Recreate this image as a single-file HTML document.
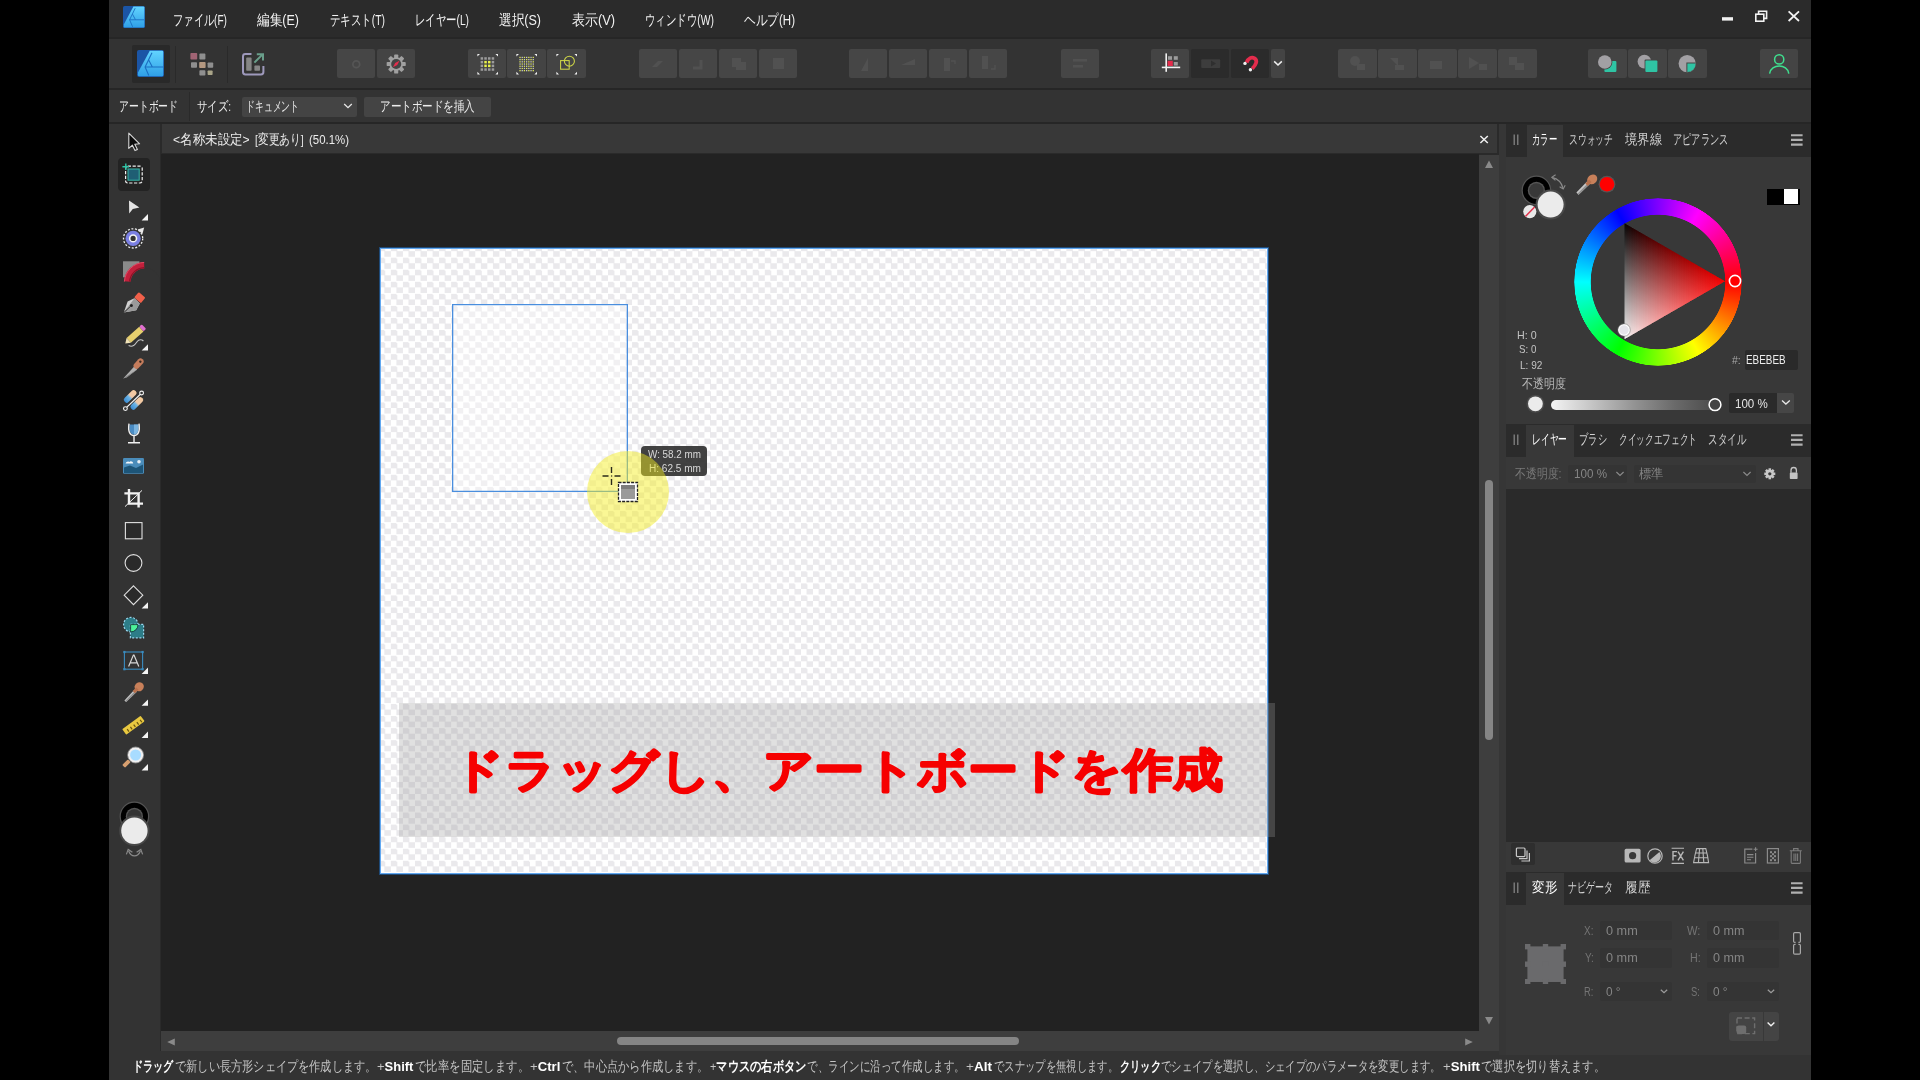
<!DOCTYPE html>
<html lang="ja"><head><meta charset="utf-8"><title>Affinity Designer</title>
<style>
html,body{margin:0;padding:0;width:1920px;height:1080px;overflow:hidden;background:#000;}
body{font-family:"Liberation Sans",sans-serif;position:relative;}
#app div,#app svg,#app span.t{position:absolute;}
#app{position:absolute;left:0;top:0;width:1920px;height:1080px;overflow:hidden;}
span.t{white-space:nowrap;transform-origin:0 50%;display:block;z-index:5;}
b{font-weight:bold;color:#fff;}
</style></head><body><div id="app">
<div style="left:109px;top:0px;width:1702px;height:1080px;background:#333333;"></div>
<div style="left:109px;top:0px;width:1702px;height:37px;background:#2b2b2b;"></div>
<div style="left:109px;top:37px;width:1702px;height:2px;background:#262626;"></div>
<div style="left:109px;top:88px;width:1702px;height:2px;background:#262626;"></div>
<div style="left:109px;top:122px;width:1702px;height:2px;background:#262626;"></div>
<div style="left:160px;top:124px;width:1340px;height:931px;background:#2a2a2a;"></div>
<div style="left:162px;top:124px;width:1335px;height:29.4px;background:#383838;"></div>
<div style="left:161px;top:154px;width:1318px;height:877px;background:#222222;"></div>
<div style="left:1479px;top:155px;width:20px;height:896px;background:#3e3e3e;"></div>
<div style="left:161px;top:1031px;width:1338px;height:20px;background:#3e3e3e;"></div>
<div style="left:160px;top:1051px;width:1340px;height:30px;background:#333333;"></div>
<div style="left:1499px;top:124px;width:7px;height:931px;background:#363636;"></div>
<div style="left:1506px;top:124px;width:305px;height:931px;background:#383838;"></div>
<div style="left:1506px;top:124px;width:305px;height:33px;background:#2b2b2b;"></div>
<div style="left:1506px;top:424px;width:305px;height:33px;background:#2b2b2b;"></div>
<div style="left:1506px;top:872px;width:305px;height:33px;background:#2b2b2b;"></div>
<div style="left:1526.6px;top:125px;width:36.6px;height:32px;background:#383838;"></div>
<div style="left:1526.4px;top:425px;width:48px;height:32px;background:#383838;"></div>
<div style="left:1526.4px;top:873px;width:37.2px;height:32px;background:#383838;"></div>
<div style="left:1506px;top:489px;width:305px;height:353px;background:#2a2a2a;"></div>
<div style="left:109px;top:1055px;width:1702px;height:25px;background:#333333;"></div>
<span class="t" style="left:173px;top:9.0px;font-size:14.8px;line-height:22px;color:#f2f2f2;transform:scaleX(0.6844);">ファイル(F)</span>
<span class="t" style="left:257px;top:9.0px;font-size:14.8px;line-height:22px;color:#f2f2f2;transform:scaleX(0.8445);">編集(E)</span>
<span class="t" style="left:330px;top:9.0px;font-size:14.8px;line-height:22px;color:#f2f2f2;transform:scaleX(0.6970);">テキスト(T)</span>
<span class="t" style="left:415px;top:9.0px;font-size:14.8px;line-height:22px;color:#f2f2f2;transform:scaleX(0.6915);">レイヤー(L)</span>
<span class="t" style="left:499px;top:9.0px;font-size:14.8px;line-height:22px;color:#f2f2f2;transform:scaleX(0.8445);">選択(S)</span>
<span class="t" style="left:572px;top:9.0px;font-size:14.8px;line-height:22px;color:#f2f2f2;transform:scaleX(0.8646);">表示(V)</span>
<span class="t" style="left:645px;top:9.0px;font-size:14.8px;line-height:22px;color:#f2f2f2;transform:scaleX(0.6982);">ウィンドウ(W)</span>
<span class="t" style="left:744px;top:9.0px;font-size:14.8px;line-height:22px;color:#f2f2f2;transform:scaleX(0.7781);">ヘルプ(H)</span>
<span class="t" style="left:119px;top:96.9px;font-size:13.6px;line-height:20px;color:#ececec;transform:scaleX(0.7024);">アートボード</span>
<span class="t" style="left:197px;top:96.9px;font-size:13.6px;line-height:20px;color:#ececec;transform:scaleX(0.7427);">サイズ:</span>
<span class="t" style="left:246px;top:96.9px;font-size:13.6px;line-height:20px;color:#ececec;transform:scaleX(0.6310);">ドキュメント</span>
<span class="t" style="left:380px;top:96.9px;font-size:13.6px;line-height:20px;color:#ececec;transform:scaleX(0.7540);">アートボードを挿入</span>
<span class="t" style="left:173.3px;top:130.2px;font-size:13.6px;line-height:20px;color:#ececec;transform:scaleX(0.8930);">&lt;名称未設定&gt;</span>
<span class="t" style="left:255px;top:130.2px;font-size:13.6px;line-height:20px;color:#ececec;transform:scaleX(0.7662);">[変更あり]</span>
<span class="t" style="left:309.2px;top:130.2px;font-size:13.6px;line-height:20px;color:#ececec;transform:scaleX(0.8402);">(50.1%)</span>
<span class="t" style="left:1532px;top:129.8px;font-size:13.6px;line-height:20px;color:#fff;transform:scaleX(0.5952);">カラー</span>
<span class="t" style="left:1569px;top:129.8px;font-size:13.6px;line-height:20px;color:#d2d2d2;transform:scaleX(0.6286);">スウォッチ</span>
<span class="t" style="left:1625px;top:129.8px;font-size:13.6px;line-height:20px;color:#d2d2d2;transform:scaleX(0.8810);">境界線</span>
<span class="t" style="left:1673px;top:129.8px;font-size:13.6px;line-height:20px;color:#d2d2d2;transform:scaleX(0.6548);">アピアランス</span>
<span class="t" style="left:1532px;top:429.8px;font-size:13.6px;line-height:20px;color:#fff;transform:scaleX(0.6250);">レイヤー</span>
<span class="t" style="left:1579px;top:429.8px;font-size:13.6px;line-height:20px;color:#d2d2d2;transform:scaleX(0.6667);">ブラシ</span>
<span class="t" style="left:1619px;top:429.8px;font-size:13.6px;line-height:20px;color:#d2d2d2;transform:scaleX(0.6190);">クイックエフェクト</span>
<span class="t" style="left:1708px;top:429.8px;font-size:13.6px;line-height:20px;color:#d2d2d2;transform:scaleX(0.6786);">スタイル</span>
<span class="t" style="left:1532px;top:877.8px;font-size:13.6px;line-height:20px;color:#fff;transform:scaleX(0.8929);">変形</span>
<span class="t" style="left:1568px;top:877.8px;font-size:13.6px;line-height:20px;color:#d2d2d2;transform:scaleX(0.6429);">ナビゲータ</span>
<span class="t" style="left:1625px;top:877.8px;font-size:13.6px;line-height:20px;color:#d2d2d2;transform:scaleX(0.8929);">履歴</span>
<span class="t" style="left:133.2px;top:1056.6px;font-size:13.6px;line-height:20px;color:#c4c4c4;transform:scaleX(0.7250);"><b>ドラッグ</b></span>
<span class="t" style="left:174.6px;top:1056.6px;font-size:13.6px;line-height:20px;color:#c4c4c4;transform:scaleX(0.7992);">で新しい長方形シェイプを作成します。</span>
<span class="t" style="left:377.3px;top:1056.6px;font-size:13.6px;line-height:20px;color:#c4c4c4;transform:scaleX(0.9540);">+<b>Shift</b></span>
<span class="t" style="left:415px;top:1056.6px;font-size:13.6px;line-height:20px;color:#c4c4c4;transform:scaleX(0.8143);">で比率を固定します。</span>
<span class="t" style="left:530.3px;top:1056.6px;font-size:13.6px;line-height:20px;color:#c4c4c4;transform:scaleX(0.9689);">+<b>Ctrl</b></span>
<span class="t" style="left:562px;top:1056.6px;font-size:13.6px;line-height:20px;color:#c4c4c4;transform:scaleX(0.8022);">で、中心点から作成します。</span>
<span class="t" style="left:709.5px;top:1056.6px;font-size:13.6px;line-height:20px;color:#c4c4c4;transform:scaleX(0.8045);">+<b>マウスの右ボタン</b></span>
<span class="t" style="left:807.4px;top:1056.6px;font-size:13.6px;line-height:20px;color:#c4c4c4;transform:scaleX(0.7505);">で、ラインに沿って作成します。</span>
<span class="t" style="left:966.4px;top:1056.6px;font-size:13.6px;line-height:20px;color:#c4c4c4;transform:scaleX(0.9970);">+<b>Alt</b></span>
<span class="t" style="left:993.6px;top:1056.6px;font-size:13.6px;line-height:20px;color:#c4c4c4;transform:scaleX(0.7381);">でスナップを無視します。</span>
<span class="t" style="left:1119.6px;top:1056.6px;font-size:13.6px;line-height:20px;color:#c4c4c4;transform:scaleX(0.7321);"><b>クリック</b></span>
<span class="t" style="left:1161.4px;top:1056.6px;font-size:13.6px;line-height:20px;color:#c4c4c4;transform:scaleX(0.7397);">でシェイプを選択し、シェイプのパラメータを変更します。</span>
<span class="t" style="left:1443.2px;top:1056.6px;font-size:13.6px;line-height:20px;color:#c4c4c4;transform:scaleX(0.9671);">+<b>Shift</b></span>
<span class="t" style="left:1481px;top:1056.6px;font-size:13.6px;line-height:20px;color:#c4c4c4;transform:scaleX(0.8039);">で選択を切り替えます。</span>
<div style="left:379.3px;top:247px;width:889.8px;height:628.3px;background:#1f4a78;"></div>
<div style="left:380px;top:248px;width:888.3px;height:626px;background:#fff;background-color:#fff;background-image:repeating-conic-gradient(#eae9ec 0% 25%,#ffffff 0% 50%);background-size:12.068px 12.068px;background-position:-1.23px 3.2px;box-shadow:inset 0 0 0 1px #62a8f0;"></div>
<div style="left:399px;top:703px;width:876px;height:134px;background:rgba(153,153,153,0.30);"></div>
<svg style="left:440px;top:730px;" width="800" height="84" viewBox="0 0 800 84"><text transform="translate(13.25,0) scale(1.09,1)" x="0" y="56" font-size="46" font-weight="bold" textLength="706.4" lengthAdjust="spacing" fill="#f60000" stroke="#f60000" stroke-width="2.1" stroke-linejoin="round" style="font-family:'Liberation Sans',sans-serif">ドラッグし、アートボードを作成</text></svg>
<div style="left:452px;top:304px;width:176px;height:188px;background:rgba(255,255,255,0.34);box-shadow:inset 0 0 0 1.3px #4a8ede;"></div>
<div style="left:641px;top:446px;width:66px;height:30px;background:rgba(40,40,40,0.88);border-radius:4px;"></div>
<span class="t" style="left:648px;top:447.0px;font-size:10px;line-height:15px;color:#d8d8d8;transform:scaleX(0.9866);">W: 58.2 mm</span>
<span class="t" style="left:649px;top:460.5px;font-size:10px;line-height:15px;color:#d8d8d8;transform:scaleX(1.0060);">H: 62.5 mm</span>
<svg style="left:600px;top:465px;z-index:10;" width="24" height="24" viewBox="0 0 24 24"><path d="M11.5 2v6M11.5 14v6M2.5 11h6M14.5 11h6" stroke="#2a2a1a" stroke-width="1.4" fill="none"/><rect x="11" y="10.4" width="1.2" height="1.2" fill="#2a2a1a"/></svg>
<svg style="left:617px;top:481px;z-index:10;" width="22" height="22" viewBox="0 0 22 22"><rect x="1.5" y="1.5" width="19" height="19" fill="#fff" stroke="#222" stroke-width="1.3" stroke-dasharray="3 1.2"/><rect x="4" y="4" width="14" height="14" fill="#9a9a9a"/><rect x="4" y="4" width="14" height="4" fill="#7c7c7c"/></svg>
<div style="left:586.6px;top:451px;width:82px;height:82px;background:rgba(244,238,30,0.47);border-radius:50%;z-index:9;"></div>
<svg style="left:123px;top:6px;" width="22" height="22" viewBox="0 0 22 22"><defs><linearGradient id="lg123" x1="0" y1="0" x2="0" y2="1"><stop offset="0" stop-color="#62d4ff"/><stop offset="1" stop-color="#2f9fe6"/></linearGradient></defs><rect x="0" y="0" width="22" height="22" rx="1.6" fill="#1b55a6"/><path d="M10.4 0.6H20.4Q21.4 0.6 21.4 1.6V20.4Q21.4 21.4 20.4 21.4H1.6Q0.6 21.4 0.7 20.2L0.9 18.2Z" fill="url(#lg123)"/><path d="M12.2 2.2L6.6 13.8L9.6 20.8M6.6 13.8H21.2M9.4 8L12.4 13.6" stroke="#1b6ec2" stroke-width="0.9" fill="none"/></svg>
<svg style="left:1718px;top:8px;" width="90" height="18" viewBox="0 0 90 18"><rect x="4" y="9.2" width="11" height="3.4" fill="#f2f2f2"/><rect x="37.8" y="6.2" width="8" height="7" fill="none" stroke="#f2f2f2" stroke-width="1.6"/><path d="M40.6 6V3.2H48.6V10.4H46" fill="none" stroke="#f2f2f2" stroke-width="1.6"/><path d="M70.6 3.4L81 13M81 3.4L70.6 13" stroke="#f2f2f2" stroke-width="1.8" fill="none"/></svg>
<div style="left:132px;top:45px;width:38px;height:38px;background:#292929;border-radius:2px;"></div>
<svg style="left:137px;top:50px;" width="27" height="27" viewBox="0 0 22 22"><defs><linearGradient id="lg137" x1="0" y1="0" x2="0" y2="1"><stop offset="0" stop-color="#62d4ff"/><stop offset="1" stop-color="#2f9fe6"/></linearGradient></defs><rect x="0" y="0" width="22" height="22" rx="1.6" fill="#1b55a6"/><path d="M10.4 0.6H20.4Q21.4 0.6 21.4 1.6V20.4Q21.4 21.4 20.4 21.4H1.6Q0.6 21.4 0.7 20.2L0.9 18.2Z" fill="url(#lg137)"/><path d="M12.2 2.2L6.6 13.8L9.6 20.8M6.6 13.8H21.2M9.4 8L12.4 13.6" stroke="#1b6ec2" stroke-width="0.9" fill="none"/></svg>
<div style="left:175px;top:46px;width:1px;height:37px;background:#2a2a2a;"></div>
<div style="left:227px;top:46px;width:1px;height:37px;background:#2a2a2a;"></div>
<svg style="left:186px;top:50px;opacity:0.9;" width="32" height="30" viewBox="0 0 32 30"><rect x="4.4" y="3.0" width="6.8" height="6.6" rx="0.8" fill="#ae6a7c"/><rect x="13.4" y="3.6" width="6" height="6" rx="0.8" fill="#9a9a9a"/><rect x="5.0" y="12.2" width="6" height="5.6" rx="0.8" fill="#9a9a9a"/><rect x="13.2" y="12.0" width="6.4" height="6" rx="0.8" fill="#c2a48a"/><rect x="21.6" y="12.4" width="5.6" height="5.4" rx="0.8" fill="#9a9a9a"/><rect x="13.4" y="20.2" width="6" height="5.4" rx="0.8" fill="#9a9a9a"/><rect x="21.6" y="20.4" width="5" height="4.6" rx="0.8" fill="#b6b192"/></svg>
<svg style="left:240px;top:50px;opacity:0.92;" width="28" height="28" viewBox="0 0 28 28"><path d="M11.5 4H5.4Q3 4 3 6.4V22Q3 24.4 5.4 24.4H21Q23.4 24.4 23.4 22V16" fill="none" stroke="#a8a2c8" stroke-width="2"/><rect x="6.2" y="7.6" width="5.4" height="13.2" rx="0.8" fill="#8e8e8e"/><rect x="14.4" y="15.6" width="5.6" height="5.2" rx="0.8" fill="#8e8e8e"/><path d="M14.4 12.6L22.4 4.6M16.8 4.2H23V10.4" fill="none" stroke="#6ea892" stroke-width="2"/></svg>
<div style="left:337px;top:49px;width:38px;height:29px;background:#464646;border-radius:2px;"></div>
<svg style="left:337px;top:49px;" width="38" height="29" viewBox="0 0 38 29"><circle cx="19.3" cy="15.2" r="3.4" fill="none" stroke="#555" stroke-width="1.8"/></svg>
<div style="left:377px;top:49px;width:38px;height:29px;background:#444444;border-radius:2px;"></div>
<svg style="left:377px;top:49px;" width="38" height="29" viewBox="0 0 38 29"><g transform="translate(19.2,15) scale(0.9)"><rect x="-2.3" y="-10.6" width="4.6" height="5" rx="1" fill="#a0a0a0" transform="rotate(0)"/><rect x="-2.3" y="-10.6" width="4.6" height="5" rx="1" fill="#a0a0a0" transform="rotate(45)"/><rect x="-2.3" y="-10.6" width="4.6" height="5" rx="1" fill="#a0a0a0" transform="rotate(90)"/><rect x="-2.3" y="-10.6" width="4.6" height="5" rx="1" fill="#a0a0a0" transform="rotate(135)"/><rect x="-2.3" y="-10.6" width="4.6" height="5" rx="1" fill="#a0a0a0" transform="rotate(180)"/><rect x="-2.3" y="-10.6" width="4.6" height="5" rx="1" fill="#a0a0a0" transform="rotate(225)"/><rect x="-2.3" y="-10.6" width="4.6" height="5" rx="1" fill="#a0a0a0" transform="rotate(270)"/><rect x="-2.3" y="-10.6" width="4.6" height="5" rx="1" fill="#a0a0a0" transform="rotate(315)"/><circle r="7.6" fill="#a0a0a0"/><circle r="5.6" fill="#444"/><path d="M-3.6 3.6L-1.2 -1.2L3.6 -3.6L1.2 1.2Z" fill="#e42c4c"/></g></svg>
<div style="left:467.5px;top:49px;width:38.4px;height:29px;background:#444444;border-radius:2px;"></div>
<div style="left:507.3px;top:49px;width:38.4px;height:29px;background:#444444;border-radius:2px;"></div>
<div style="left:547.4px;top:49px;width:38.4px;height:29px;background:#444444;border-radius:2px;"></div>
<svg style="left:467.5px;top:49px;" width="38.4" height="29" viewBox="0 0 38.4 29"><path d="M9.4 5h2.6l-2.6 2.6zM30 5h-2.6l2.6 2.6zM9.4 25.4h2.6l-2.6 -2.6zM30 25.4h-2.6l2.6 -2.6z" fill="#f0f0f0"/><rect x="12.6" y="8.2" width="2.5" height="2.5" fill="#9c9c9c"/><rect x="12.6" y="11.9" width="2.5" height="2.5" fill="#9c9c9c"/><rect x="12.6" y="15.6" width="2.5" height="2.5" fill="#9c9c9c"/><rect x="12.6" y="19.3" width="2.5" height="2.5" fill="#9c9c9c"/><rect x="16.3" y="8.2" width="2.5" height="2.5" fill="#9c9c9c"/><rect x="16.3" y="11.9" width="2.5" height="2.5" fill="#eaf24a"/><rect x="16.3" y="15.6" width="2.5" height="2.5" fill="#eaf24a"/><rect x="16.3" y="19.3" width="2.5" height="2.5" fill="#9c9c9c"/><rect x="20.0" y="8.2" width="2.5" height="2.5" fill="#9c9c9c"/><rect x="20.0" y="11.9" width="2.5" height="2.5" fill="#eaf24a"/><rect x="20.0" y="15.6" width="2.5" height="2.5" fill="#eaf24a"/><rect x="20.0" y="19.3" width="2.5" height="2.5" fill="#9c9c9c"/><rect x="23.7" y="8.2" width="2.5" height="2.5" fill="#9c9c9c"/><rect x="23.7" y="11.9" width="2.5" height="2.5" fill="#9c9c9c"/><rect x="23.7" y="15.6" width="2.5" height="2.5" fill="#9c9c9c"/><rect x="23.7" y="19.3" width="2.5" height="2.5" fill="#9c9c9c"/></svg>
<svg style="left:507.3px;top:49px;" width="38.4" height="29" viewBox="0 0 38.4 29"><path d="M9.4 5h2.6l-2.6 2.6zM30 5h-2.6l2.6 2.6zM9.4 25.4h2.6l-2.6 -2.6zM30 25.4h-2.6l2.6 -2.6z" fill="#f0f0f0"/><rect x="12.4" y="7.8" width="1.3" height="1.3" fill="#dfe85a"/><rect x="12.4" y="10.0" width="1.3" height="1.3" fill="#c9c9c9"/><rect x="12.4" y="12.2" width="1.3" height="1.3" fill="#dfe85a"/><rect x="12.4" y="14.4" width="1.3" height="1.3" fill="#c9c9c9"/><rect x="12.4" y="16.6" width="1.3" height="1.3" fill="#dfe85a"/><rect x="12.4" y="18.8" width="1.3" height="1.3" fill="#c9c9c9"/><rect x="12.4" y="21.0" width="1.3" height="1.3" fill="#dfe85a"/><rect x="14.6" y="7.8" width="1.3" height="1.3" fill="#c9c9c9"/><rect x="14.6" y="10.0" width="1.3" height="1.3" fill="#dfe85a"/><rect x="14.6" y="12.2" width="1.3" height="1.3" fill="#c9c9c9"/><rect x="14.6" y="14.4" width="1.3" height="1.3" fill="#dfe85a"/><rect x="14.6" y="16.6" width="1.3" height="1.3" fill="#c9c9c9"/><rect x="14.6" y="18.8" width="1.3" height="1.3" fill="#dfe85a"/><rect x="14.6" y="21.0" width="1.3" height="1.3" fill="#c9c9c9"/><rect x="16.8" y="7.8" width="1.3" height="1.3" fill="#dfe85a"/><rect x="16.8" y="10.0" width="1.3" height="1.3" fill="#c9c9c9"/><rect x="16.8" y="12.2" width="1.3" height="1.3" fill="#dfe85a"/><rect x="16.8" y="14.4" width="1.3" height="1.3" fill="#c9c9c9"/><rect x="16.8" y="16.6" width="1.3" height="1.3" fill="#dfe85a"/><rect x="16.8" y="18.8" width="1.3" height="1.3" fill="#c9c9c9"/><rect x="16.8" y="21.0" width="1.3" height="1.3" fill="#dfe85a"/><rect x="19.0" y="7.8" width="1.3" height="1.3" fill="#c9c9c9"/><rect x="19.0" y="10.0" width="1.3" height="1.3" fill="#dfe85a"/><rect x="19.0" y="12.2" width="1.3" height="1.3" fill="#c9c9c9"/><rect x="19.0" y="14.4" width="1.3" height="1.3" fill="#dfe85a"/><rect x="19.0" y="16.6" width="1.3" height="1.3" fill="#c9c9c9"/><rect x="19.0" y="18.8" width="1.3" height="1.3" fill="#dfe85a"/><rect x="19.0" y="21.0" width="1.3" height="1.3" fill="#c9c9c9"/><rect x="21.2" y="7.8" width="1.3" height="1.3" fill="#dfe85a"/><rect x="21.2" y="10.0" width="1.3" height="1.3" fill="#c9c9c9"/><rect x="21.2" y="12.2" width="1.3" height="1.3" fill="#dfe85a"/><rect x="21.2" y="14.4" width="1.3" height="1.3" fill="#c9c9c9"/><rect x="21.2" y="16.6" width="1.3" height="1.3" fill="#dfe85a"/><rect x="21.2" y="18.8" width="1.3" height="1.3" fill="#c9c9c9"/><rect x="21.2" y="21.0" width="1.3" height="1.3" fill="#dfe85a"/><rect x="23.4" y="7.8" width="1.3" height="1.3" fill="#c9c9c9"/><rect x="23.4" y="10.0" width="1.3" height="1.3" fill="#dfe85a"/><rect x="23.4" y="12.2" width="1.3" height="1.3" fill="#c9c9c9"/><rect x="23.4" y="14.4" width="1.3" height="1.3" fill="#dfe85a"/><rect x="23.4" y="16.6" width="1.3" height="1.3" fill="#c9c9c9"/><rect x="23.4" y="18.8" width="1.3" height="1.3" fill="#dfe85a"/><rect x="23.4" y="21.0" width="1.3" height="1.3" fill="#c9c9c9"/><rect x="25.6" y="7.8" width="1.3" height="1.3" fill="#dfe85a"/><rect x="25.6" y="10.0" width="1.3" height="1.3" fill="#c9c9c9"/><rect x="25.6" y="12.2" width="1.3" height="1.3" fill="#dfe85a"/><rect x="25.6" y="14.4" width="1.3" height="1.3" fill="#c9c9c9"/><rect x="25.6" y="16.6" width="1.3" height="1.3" fill="#dfe85a"/><rect x="25.6" y="18.8" width="1.3" height="1.3" fill="#c9c9c9"/><rect x="25.6" y="21.0" width="1.3" height="1.3" fill="#dfe85a"/></svg>
<svg style="left:547.4px;top:49px;" width="38.4" height="29" viewBox="0 0 38.4 29"><path d="M9.4 5h2.6l-2.6 2.6zM30 5h-2.6l2.6 2.6zM9.4 25.4h2.6l-2.6 -2.6zM30 25.4h-2.6l2.6 -2.6z" fill="#f0f0f0"/><rect x="13.6" y="11.6" width="8.6" height="8.6" fill="none" stroke="#cfd748" stroke-width="1.05"/><circle cx="22.4" cy="12.2" r="5" fill="none" stroke="#cfd748" stroke-width="1.05"/></svg>
<div style="left:639px;top:49px;width:38px;height:29px;background:#464646;border-radius:2px;"></div>
<div style="left:679px;top:49px;width:38px;height:29px;background:#464646;border-radius:2px;"></div>
<div style="left:719px;top:49px;width:38px;height:29px;background:#464646;border-radius:2px;"></div>
<div style="left:759px;top:49px;width:38px;height:29px;background:#464646;border-radius:2px;"></div>
<svg style="left:639px;top:49px;" width="160" height="29" viewBox="0 0 160 29"><path d="M13 18l6-6h5l-6 6z" fill="#515151"/><path d="M54 19h8v-8" stroke="#515151" stroke-width="3" fill="none"/><rect x="93" y="9" width="9" height="9" fill="#515151"/><rect x="97" y="13" width="10" height="8" fill="#515151"/><rect x="134" y="9" width="11" height="11" fill="#515151"/></svg>
<div style="left:849px;top:49px;width:38.4px;height:29px;background:#464646;border-radius:2px;"></div>
<div style="left:889px;top:49px;width:38.4px;height:29px;background:#464646;border-radius:2px;"></div>
<div style="left:929px;top:49px;width:38.4px;height:29px;background:#464646;border-radius:2px;"></div>
<div style="left:969px;top:49px;width:38.4px;height:29px;background:#464646;border-radius:2px;"></div>
<svg style="left:849px;top:49px;" width="160" height="29" viewBox="0 0 160 29"><path d="M12 22l7-13v13z" fill="#515151"/><path d="M52 16l14-6v6z" fill="#515151"/><rect x="95" y="9" width="6" height="13" fill="#515151"/><path d="M102 12h4v3" stroke="#515151" stroke-width="1.4" fill="none"/><rect x="133" y="7" width="6" height="13" fill="#515151"/><path d="M142 20h4v-4" stroke="#515151" stroke-width="1.4" fill="none"/></svg>
<div style="left:1060.6px;top:49px;width:38px;height:29px;background:#464646;border-radius:2px;"></div>
<svg style="left:1060.6px;top:49px;" width="38" height="29" viewBox="0 0 38 29"><rect x="12" y="10" width="14" height="2.6" fill="#515151"/><rect x="12" y="16" width="10" height="2.6" fill="#515151"/></svg>
<div style="left:1151px;top:49px;width:38px;height:29px;background:#444444;border-radius:2px;"></div>
<svg style="left:1151px;top:49px;" width="38" height="29" viewBox="0 0 38 29"><rect x="17" y="7.2" width="4" height="3.6" fill="#9c9c9c"/><rect x="22.8" y="7.2" width="4" height="3.6" fill="#9c9c9c"/><rect x="22.8" y="13" width="4" height="3.6" fill="#9c9c9c"/><rect x="16.6" y="11.8" width="5.2" height="5.2" fill="#e42c4c"/><rect x="14.4" y="4.4" width="1.6" height="18.4" fill="#f2f2f2"/><rect x="10.8" y="17.6" width="18.4" height="1.6" fill="#f2f2f2"/></svg>
<div style="left:1191px;top:49px;width:38px;height:29px;background:#2b2b2b;border-radius:2px;"></div>
<svg style="left:1191px;top:49px;" width="38" height="29" viewBox="0 0 38 29"><rect x="10.2" y="10.2" width="19" height="8.8" rx="1" fill="#3d3d3d"/><path d="M20 11.6l5 3-5 3z" fill="#2f2f2f"/></svg>
<div style="left:1231px;top:49px;width:38px;height:29px;background:#2b2b2b;border-radius:2px;"></div>
<svg style="left:1231px;top:49px;" width="38" height="29" viewBox="0 0 38 29"><path d="M15.6 13.4C17.4 9.2 20.6 7.6 23.6 9.4C26.6 11.4 25.6 15.4 21.2 19.6" fill="none" stroke="#e42c4c" stroke-width="3.8"/><circle cx="14" cy="14.4" r="1.7" fill="#f0f0f0"/><circle cx="19.4" cy="20.8" r="1.7" fill="#f0f0f0"/></svg>
<div style="left:1271px;top:49px;width:14px;height:29px;background:#444444;border-radius:2px;"></div>
<svg style="left:1271px;top:49px;" width="14" height="29" viewBox="0 0 14 29"><path d="M3.2 12.4L7 16L10.8 12.4" fill="none" stroke="#f0f0f0" stroke-width="1.5"/></svg>
<div style="left:1338px;top:49px;width:38.6px;height:29px;background:#464646;border-radius:2px;"></div>
<div style="left:1378px;top:49px;width:38.6px;height:29px;background:#464646;border-radius:2px;"></div>
<div style="left:1418px;top:49px;width:38.6px;height:29px;background:#464646;border-radius:2px;"></div>
<div style="left:1458px;top:49px;width:38.6px;height:29px;background:#464646;border-radius:2px;"></div>
<div style="left:1498px;top:49px;width:38.6px;height:29px;background:#464646;border-radius:2px;"></div>
<svg style="left:1338px;top:49px;" width="200" height="29" viewBox="0 0 200 29"><circle cx="17" cy="12" r="5" fill="#515151"/><rect x="19" y="15" width="8" height="6" fill="#515151"/><path d="M52 9h8v8z" fill="#515151"/><rect x="57" y="16" width="9" height="5" fill="#515151"/><rect x="92" y="12" width="12" height="8" fill="#515151"/><path d="M131 8l10 6-10 6z" fill="#515151"/><rect x="141" y="15" width="8" height="6" fill="#515151"/><rect x="171" y="8" width="8" height="8" fill="#515151"/><rect x="177" y="14" width="9" height="7" fill="#515151"/></svg>
<div style="left:1588px;top:49px;width:38.6px;height:29px;background:#444444;border-radius:2px;"></div>
<div style="left:1628px;top:49px;width:38.6px;height:29px;background:#444444;border-radius:2px;"></div>
<div style="left:1668px;top:49px;width:38.6px;height:29px;background:#444444;border-radius:2px;"></div>
<svg style="left:1588px;top:49px;" width="38.6" height="29" viewBox="0 0 38.6 29"><rect x="16.4" y="12" width="12" height="11" rx="1" fill="#2fc4a4"/><circle cx="16.8" cy="13" r="7.6" fill="#444"/><circle cx="16.8" cy="13" r="6.8" fill="#a2a0a4"/></svg>
<svg style="left:1628px;top:49px;" width="38.6" height="29" viewBox="0 0 38.6 29"><circle cx="16.4" cy="12.6" r="6.8" fill="#a2a0a4"/><rect x="16.6" y="10.6" width="13" height="12.8" rx="1" fill="#444"/><rect x="17.4" y="11.4" width="12" height="11.6" rx="1" fill="#2fc4a4"/></svg>
<svg style="left:1668px;top:49px;" width="38.6" height="29" viewBox="0 0 38.6 29"><circle cx="19.2" cy="14.6" r="8.6" fill="#a2a0a4"/><path d="M18.4 13.4H27.7A8.6 8.6 0 0 1 18.4 23.2Z" fill="#444"/><path d="M19.4 14.4H27.6A8.6 8.6 0 0 1 19.4 23.1Z" fill="#2fc4a4"/></svg>
<div style="left:1760px;top:49px;width:38px;height:29px;background:#444444;border-radius:2px;"></div>
<svg style="left:1760px;top:49px;" width="38" height="29" viewBox="0 0 38 29"><circle cx="19.2" cy="10.4" r="4.6" fill="none" stroke="#3fe08f" stroke-width="1.5"/><path d="M9.6 24.6C11 14.6 27.4 14.6 28.8 24.6" fill="none" stroke="#3fe08f" stroke-width="1.5"/></svg>
<div style="left:188.5px;top:92px;width:1px;height:29px;background:#2a2a2a;"></div>
<div style="left:242px;top:97px;width:115px;height:20px;background:#444;border-radius:2px;"></div>
<svg style="left:341px;top:99px;" width="14" height="14" viewBox="0 0 14 14"><path d="M3.2 5L7 8.6L10.8 5" fill="none" stroke="#e8e8e8" stroke-width="1.3"/></svg>
<div style="left:364px;top:97px;width:127px;height:20px;background:#444;border-radius:2px;"></div>
<svg style="left:1478px;top:133px;" width="12" height="12" viewBox="0 0 12 12"><path d="M2.4 3L9.8 10M9.8 3L2.4 10" stroke="#f0f0f0" stroke-width="1.5"/></svg>
<svg style="left:1482px;top:158px;" width="14" height="12" viewBox="0 0 14 12"><path d="M7 2.4L11 10H3Z" fill="#8a8a8a"/></svg>
<svg style="left:1482px;top:1015px;" width="14" height="12" viewBox="0 0 14 12"><path d="M7 9.6L11 2H3Z" fill="#8a8a8a"/></svg>
<svg style="left:164px;top:1035.8px;" width="14" height="12" viewBox="0 0 14 12"><path d="M3.2 6L10.8 2.4V9.6Z" fill="#8a8a8a"/></svg>
<svg style="left:1461.6px;top:1036px;" width="14" height="12" viewBox="0 0 14 12"><path d="M10.8 6L3.2 2.4V9.6Z" fill="#8a8a8a"/></svg>
<div style="left:1485px;top:480px;width:8px;height:260px;background:#858585;border-radius:4px;"></div>
<div style="left:617px;top:1037px;width:402px;height:8px;background:#858585;border-radius:4px;"></div>
<svg style="left:109px;top:124px;" width="51" height="34" viewBox="0 0 51 34"><path d="M19.8 9.2V24.4L23.4 21.2L26 26.6L28.4 25.4L25.8 20.2L30.6 19.8Z" fill="#0c0c0c" stroke="#d8d8d8" stroke-width="1.1" stroke-linejoin="round"/></svg>
<div style="left:118px;top:158px;width:32px;height:32.5px;background:#232323;border-radius:4px;"></div>
<svg style="left:109px;top:156px;" width="51" height="34" viewBox="0 0 51 34"><rect x="16.6" y="10.2" width="16.6" height="16.8" rx="2.2" fill="none" stroke="#f0f0f0" stroke-width="1.2" stroke-dasharray="3.2 1.6"/><rect x="19" y="13" width="11.2" height="11.2" fill="#1f5e74" stroke="#37b5a6" stroke-width="1"/><path d="M13.4 10.8H20M16.8 7.6V14" stroke="#2ec4a6" stroke-width="1.4"/></svg>
<svg style="left:109px;top:190px;" width="51" height="34" viewBox="0 0 51 34"><path d="M20 10.6L30.4 17.4L23.8 19L20.2 23.6Z" fill="#e4e4e4"/><path d="M39 30.4h-6.4l6.4 -6.4z" fill="#f4f4f4"/></svg>
<svg style="left:109px;top:222px;" width="51" height="34" viewBox="0 0 51 34"><circle cx="24.1" cy="16.4" r="9.6" fill="none" stroke="#f0f0f0" stroke-width="1.3" stroke-dasharray="2 1.6"/><circle cx="24.1" cy="16.4" r="7.6" fill="#7a7fe2"/><circle cx="24.1" cy="16.4" r="3.4" fill="#333" stroke="#f4f4f4" stroke-width="1.6"/><path d="M28.6 7.6L35.2 5.4L33.4 12Z" fill="#e8e8e8"/></svg>
<svg style="left:109px;top:254px;" width="51" height="34" viewBox="0 0 51 34"><rect x="14" y="7.3" width="16.4" height="16" fill="#8a8a8a"/><circle cx="36" cy="29" r="15" fill="#333"/><path d="M18.25 27.6A17.75 17.75 0 0 1 35.2 11.25" fill="none" stroke="#c2203c" stroke-width="6.6"/><path d="M15.4 27.6A20.6 20.6 0 0 1 35.2 8.4" fill="none" stroke="#e0506a" stroke-width="0.9"/><path d="M20.6 27.6A15.4 15.4 0 0 1 35.2 13.6" fill="none" stroke="#8c1428" stroke-width="1.2"/></svg>
<svg style="left:109px;top:288px;" width="51" height="34" viewBox="0 0 51 34"><path d="M14.8 24.6L18.6 13.6L25.4 10.2L30.8 15.4L27.2 22.2Z" fill="#d0d0d0"/><path d="M14.8 24.6L25.4 10.2L30.8 15.4L27.2 22.2Z" fill="#9a9a9a"/><circle cx="22.4" cy="17.6" r="1.5" fill="#222"/><path d="M14.8 24.6L21.4 18.4" stroke="#222" stroke-width="0.9"/><rect x="-4.4" y="-3.6" width="8.8" height="7.2" rx="1.2" fill="#f0604a" transform="translate(30.8,9.6) rotate(40)"/></svg>
<svg style="left:109px;top:320px;" width="51" height="34" viewBox="0 0 51 34"><g transform="translate(26.4,14.4) rotate(-42)"><rect x="-9" y="-3.2" width="17" height="6.4" fill="#e6cf6e"/><rect x="8" y="-3.2" width="3.6" height="6.4" rx="1.2" fill="#e070d0"/><path d="M-9 -3.2L-13.6 0L-9 3.2Z" fill="#f0e2b8"/></g><path d="M19.6 25.6C24 27.6 26 24.6 28 21.8C30 19 33 19.6 34.4 21" fill="none" stroke="#c8c8c8" stroke-width="1.1"/><path d="M39 30.6h-6.4l6.4 -6.4z" fill="#f4f4f4"/></svg>
<svg style="left:109px;top:352px;" width="51" height="34" viewBox="0 0 51 34"><path d="M14.2 26.6L25.2 14.6L28.2 17.6L18 25.2Z" fill="#b0b0b0"/><path d="M14.2 26.6L28.2 17.6L18 25.2Z" fill="#7c7c7c"/><g transform="translate(29.6,11.6) rotate(-48)"><rect x="-6" y="-3" width="12" height="6" rx="3" fill="#c47c5c"/><circle cx="2.6" cy="0" r="1.2" fill="#3a2a22"/></g></svg>
<svg style="left:109px;top:384px;" width="51" height="34" viewBox="0 0 51 34"><defs><linearGradient id="fg" x1="1" y1="0.5" x2="0" y2="0.5"><stop offset="0" stop-color="#f4caa0"/><stop offset="0.45" stop-color="#f0c8a8"/><stop offset="0.6" stop-color="#6ab4e8"/><stop offset="1" stop-color="#3a8ad0"/></linearGradient></defs><g transform="translate(21.2,12.4) rotate(-45)"><rect x="-7.6" y="-2.8" width="15.2" height="5.6" rx="2.4" fill="url(#fg)"/></g><g transform="translate(27.8,19.4) rotate(-45)"><rect x="-7.6" y="-2.8" width="15.2" height="5.6" rx="2.4" fill="url(#fg)"/></g><path d="M17.6 23.4L31.4 10.2" stroke="#f4f4f4" stroke-width="1.2"/><circle cx="16.4" cy="24.6" r="1.9" fill="#333" stroke="#f4f4f4" stroke-width="1.1"/><circle cx="32.6" cy="9" r="1.9" fill="#333" stroke="#f4f4f4" stroke-width="1.1"/></svg>
<svg style="left:109px;top:416px;" width="51" height="34" viewBox="0 0 51 34"><path d="M20.6 8.6C20 15 21.2 18.2 25 18.8C28.8 18.2 30 15 29.4 8.6Z" fill="#4a8cc4"/><path d="M25 8.6V18.8C28.8 18.2 30 15 29.4 8.6Z" fill="#7ab4e0"/><path d="M20 7.6C18.8 15.6 20.8 19.2 25 19.6C29.2 19.2 31.2 15.6 30 7.6M25 19.6V26.4M19 26.8H31" fill="none" stroke="#f0f0f0" stroke-width="1.4"/></svg>
<svg style="left:109px;top:449px;" width="51" height="34" viewBox="0 0 51 34"><rect x="14" y="9" width="21" height="15.8" rx="1.2" fill="#4a8cba"/><path d="M15 24V18.6L21 16.4L27 19L34 15.6V24Z" fill="#1d5578"/><circle cx="30" cy="12.8" r="1.8" fill="#e8eef4"/><path d="M16.6 14.6C17 12.4 19.6 12 20.4 13C21.6 11.6 24 12.6 24.2 14.6Z" fill="#f4f8fc"/></svg>
<svg style="left:109px;top:481px;" width="51" height="34" viewBox="0 0 51 34"><path d="M20 8V22.6H34M15.4 12.4H29.6V26.4" fill="none" stroke="#f2f2f2" stroke-width="2.4"/><path d="M16 25.6L33 9.4" stroke="#f2f2f2" stroke-width="1"/></svg>
<svg style="left:109px;top:514px;" width="51" height="34" viewBox="0 0 51 34"><rect x="16.4" y="8.6" width="16.6" height="16.2" fill="#2a2a2a" stroke="#e0e0e0" stroke-width="1.1"/></svg>
<svg style="left:109px;top:546px;" width="51" height="34" viewBox="0 0 51 34"><circle cx="24.5" cy="17" r="8.4" fill="#2a2a2a" stroke="#e0e0e0" stroke-width="1.1"/></svg>
<svg style="left:109px;top:578px;" width="51" height="34" viewBox="0 0 51 34"><path d="M24.5 7.8L33.8 17.2L24.5 26.6L15.2 17.2Z" fill="#2a2a2a" stroke="#e0e0e0" stroke-width="1.1"/><path d="M39 30.6h-6.4l6.4 -6.4z" fill="#f4f4f4"/></svg>
<svg style="left:109px;top:611px;" width="51" height="34" viewBox="0 0 51 34"><circle cx="21.8" cy="13.6" r="7.2" fill="#2d7d88" stroke="#9ad8f0" stroke-width="1.2" stroke-dasharray="2 1.6"/><rect x="21.4" y="13.4" width="13.2" height="13.4" fill="#2d7d88" stroke="#9ad8f0" stroke-width="1.2" stroke-dasharray="2 1.6"/><path d="M21.6 13.6H29A7.2 7.2 0 0 1 21.6 20.9Z" fill="#4df29a" stroke="#0c2c2c" stroke-width="0.8"/></svg>
<svg style="left:109px;top:644px;" width="51" height="34" viewBox="0 0 51 34"><rect x="15.4" y="8" width="18.2" height="17.2" fill="none" stroke="#3a8cc0" stroke-width="1.1"/><rect x="14.3" y="6.9" width="2.2" height="2.2" fill="#3a8cc0"/><rect x="14.3" y="24.099999999999998" width="2.2" height="2.2" fill="#3a8cc0"/><rect x="32.5" y="6.9" width="2.2" height="2.2" fill="#3a8cc0"/><rect x="32.5" y="24.099999999999998" width="2.2" height="2.2" fill="#3a8cc0"/><path d="M19.6 22.6L24.4 11H25L29.8 22.6M21.2 18.8H28.2" fill="none" stroke="#d8d8d8" stroke-width="1.2"/><path d="M39 30h-6.4l6.4 -6.4z" fill="#f4f4f4"/></svg>
<svg style="left:109px;top:676px;" width="51" height="34" viewBox="0 0 51 34"><path d="M15.4 24.4L25.6 13.6L27.8 15.8L17.2 26Z" fill="#c4c4c4"/><path d="M16.2 25.2L26.6 14.6L27.8 15.8L17.2 26Z" fill="#8e8e8e"/><ellipse cx="30.2" cy="10.8" rx="4.8" ry="4.4" fill="#c8805a" transform="rotate(-40 30.2 10.8)"/><rect x="-2.6" y="-1.6" width="5.2" height="3.2" fill="#b8704c" transform="translate(26.6,14.4) rotate(-45)"/><path d="M39 29.8h-6.4l6.4 -6.4z" fill="#f4f4f4"/></svg>
<svg style="left:109px;top:708px;" width="51" height="34" viewBox="0 0 51 34"><g transform="translate(24.4,17.2) rotate(-36)"><rect x="-11.4" y="-3.4" width="22.8" height="6.8" rx="0.8" fill="#e8c840"/><rect x="-8" y="-0.4" width="1.2" height="3" fill="#6a5410"/><rect x="-4" y="-0.4" width="1.2" height="3" fill="#6a5410"/><rect x="0" y="-0.4" width="1.2" height="3" fill="#6a5410"/><rect x="4" y="-0.4" width="1.2" height="3" fill="#6a5410"/><rect x="8" y="-0.4" width="1.2" height="3" fill="#6a5410"/></g><path d="M39 30h-6.4l6.4 -6.4z" fill="#f4f4f4"/></svg>
<svg style="left:109px;top:740px;" width="51" height="34" viewBox="0 0 51 34"><g transform="translate(18.6,22.4) rotate(-45)"><rect x="-5.6" y="-2" width="8" height="4" rx="1" fill="#d8a070"/></g><circle cx="26.6" cy="15" r="6.6" fill="#a8dcff" stroke="#f0f0f0" stroke-width="2.2"/><circle cx="26.6" cy="15" r="8" fill="none" stroke="#b8b8b8" stroke-width="0.6"/><path d="M39 30.4h-6.4l6.4 -6.4z" fill="#f4f4f4"/></svg>
<svg style="left:109px;top:796px;" width="51" height="66" viewBox="0 0 51 66"><circle cx="25.4" cy="20.4" r="14.8" fill="#555"/><circle cx="25.4" cy="20.4" r="13.6" fill="#000"/><circle cx="25.4" cy="20.4" r="8.6" fill="#555"/><circle cx="25.4" cy="20.4" r="7.2" fill="#333"/><circle cx="25.4" cy="34.8" r="15.2" fill="#484848"/><circle cx="25.4" cy="34.8" r="13.2" fill="#ebebeb"/><path d="M19.6 55C22.4 61.6 28.6 61.6 31.4 55" fill="none" stroke="#8a8a8a" stroke-width="1.3"/><path d="M17.4 58.4L19.2 53.4L23.4 56.2M33.6 58.4L31.8 53.4L27.6 56.2" fill="none" stroke="#8a8a8a" stroke-width="1.2"/></svg>
<svg style="left:1511px;top:133.4px;" width="10" height="14" viewBox="0 0 10 14"><path d="M3.2 1.6V12M6.8 1.6V12" stroke="#8a8a8a" stroke-width="1.2"/></svg>
<svg style="left:1511px;top:433.4px;" width="10" height="14" viewBox="0 0 10 14"><path d="M3.2 1.6V12M6.8 1.6V12" stroke="#8a8a8a" stroke-width="1.2"/></svg>
<svg style="left:1511px;top:881.4px;" width="10" height="14" viewBox="0 0 10 14"><path d="M3.2 1.6V12M6.8 1.6V12" stroke="#8a8a8a" stroke-width="1.2"/></svg>
<svg style="left:1790px;top:132.6px;" width="14" height="14" viewBox="0 0 14 14"><path d="M1 2.2H12.6M1 6.9H12.6M1 11.6H12.6" stroke="#b0b0b0" stroke-width="2.1"/></svg>
<svg style="left:1790px;top:432.6px;" width="14" height="14" viewBox="0 0 14 14"><path d="M1 2.2H12.6M1 6.9H12.6M1 11.6H12.6" stroke="#b0b0b0" stroke-width="2.1"/></svg>
<svg style="left:1790px;top:880.6px;" width="14" height="14" viewBox="0 0 14 14"><path d="M1 2.2H12.6M1 6.9H12.6M1 11.6H12.6" stroke="#b0b0b0" stroke-width="2.1"/></svg>
<svg style="left:1515px;top:168px;" width="60" height="56" viewBox="0 0 60 56"><circle cx="21.4" cy="22.4" r="14.8" fill="#555"/><circle cx="21.4" cy="22.4" r="13.6" fill="#000"/><circle cx="21.4" cy="22.4" r="8.6" fill="#555"/><circle cx="21.4" cy="22.4" r="7.2" fill="#383838"/><circle cx="14.8" cy="43.6" r="6.6" fill="#e8e8e8"/><path d="M10.4 48.4L19.6 39" stroke="#e0304a" stroke-width="1.5"/><circle cx="35.6" cy="36.6" r="15" fill="#4a4a4a"/><circle cx="35.6" cy="36.6" r="13" fill="#ebebeb"/><path d="M37.6 9.6C43 10.8 46.4 14.6 48 20" fill="none" stroke="#8a8a8a" stroke-width="1.2"/><path d="M40.6 6.8L36.8 9.4L40.4 12.4M44.6 18.8L48.2 21L50.2 17.2" fill="none" stroke="#8a8a8a" stroke-width="1.1"/></svg>
<svg style="left:1572px;top:170px;" width="46" height="30" viewBox="0 0 46 30"><path d="M4.4 22.6L15 11.6L17.6 14.2L6.6 24.8Z" fill="#c8c8c8"/><path d="M5.4 23.8L16.4 12.8L17.6 14.2L6.6 24.8Z" fill="#909090"/><ellipse cx="20.2" cy="9.4" rx="5.4" ry="4.6" fill="#c8805a" transform="rotate(-42 20.2 9.4)"/><rect x="-2.8" y="-1.7" width="5.6" height="3.4" fill="#b8704c" transform="translate(16.4,12.8) rotate(-45)"/><circle cx="35" cy="14.2" r="8.4" fill="#555"/><circle cx="35" cy="14.2" r="7.3" fill="#ff0000"/></svg>
<div style="left:1767px;top:188.6px;width:33px;height:16.4px;background:#000;"></div>
<div style="left:1783.8px;top:189.4px;width:14.4px;height:14.4px;background:#fff;"></div>
<div style="left:1574px;top:198px;width:168px;height:168px;background:conic-gradient(from 90deg,#ff0000,#ffff00,#00ff00,#00ffff,#0000ff,#ff00ff,#ff0000);border-radius:50%;-webkit-mask:radial-gradient(circle closest-side,transparent 0,transparent 66.9px,#000 67.6px,#000 83.4px,transparent 84px);mask:radial-gradient(circle closest-side,transparent 0,transparent 66.9px,#000 67.6px,#000 83.4px,transparent 84px);"></div>
<div style="left:1624px;top:223.3px;width:101.2px;height:116px;opacity:0.95;clip-path:polygon(0.5px 0,100% 50%,0.5px 100%);-webkit-clip-path:polygon(0.5px 0,100% 50%,0.5px 100%);"><div style="left:0px;top:0.0px;width:1px;height:116.0px;background:linear-gradient(rgb(0,0,0),rgb(255,255,255))"></div><div style="left:1px;top:0.2px;width:1px;height:115.5px;background:linear-gradient(rgb(5,0,0),rgb(255,252,252))"></div><div style="left:2px;top:0.8px;width:1px;height:114.4px;background:linear-gradient(rgb(9,0,0),rgb(255,250,250))"></div><div style="left:3px;top:1.4px;width:1px;height:113.2px;background:linear-gradient(rgb(13,0,0),rgb(255,247,247))"></div><div style="left:4px;top:2.0px;width:1px;height:112.1px;background:linear-gradient(rgb(16,0,0),rgb(255,244,244))"></div><div style="left:5px;top:2.5px;width:1px;height:110.9px;background:linear-gradient(rgb(20,0,0),rgb(255,241,241))"></div><div style="left:6px;top:3.1px;width:1px;height:109.8px;background:linear-gradient(rgb(23,0,0),rgb(255,239,239))"></div><div style="left:7px;top:3.7px;width:1px;height:108.6px;background:linear-gradient(rgb(26,0,0),rgb(255,236,236))"></div><div style="left:8px;top:4.3px;width:1px;height:107.5px;background:linear-gradient(rgb(30,0,0),rgb(255,233,233))"></div><div style="left:9px;top:4.8px;width:1px;height:106.3px;background:linear-gradient(rgb(33,0,0),rgb(255,230,230))"></div><div style="left:10px;top:5.4px;width:1px;height:105.2px;background:linear-gradient(rgb(36,0,0),rgb(255,228,228))"></div><div style="left:11px;top:6.0px;width:1px;height:104.0px;background:linear-gradient(rgb(39,0,0),rgb(255,225,225))"></div><div style="left:12px;top:6.6px;width:1px;height:102.8px;background:linear-gradient(rgb(42,0,0),rgb(255,222,222))"></div><div style="left:13px;top:7.2px;width:1px;height:101.7px;background:linear-gradient(rgb(45,0,0),rgb(255,220,220))"></div><div style="left:14px;top:7.7px;width:1px;height:100.5px;background:linear-gradient(rgb(48,0,0),rgb(255,217,217))"></div><div style="left:15px;top:8.3px;width:1px;height:99.4px;background:linear-gradient(rgb(51,0,0),rgb(255,214,214))"></div><div style="left:16px;top:8.9px;width:1px;height:98.2px;background:linear-gradient(rgb(53,0,0),rgb(255,211,211))"></div><div style="left:17px;top:9.5px;width:1px;height:97.1px;background:linear-gradient(rgb(56,0,0),rgb(255,209,209))"></div><div style="left:18px;top:10.0px;width:1px;height:95.9px;background:linear-gradient(rgb(59,0,0),rgb(255,206,206))"></div><div style="left:19px;top:10.6px;width:1px;height:94.8px;background:linear-gradient(rgb(62,0,0),rgb(255,203,203))"></div><div style="left:20px;top:11.2px;width:1px;height:93.6px;background:linear-gradient(rgb(65,0,0),rgb(255,201,201))"></div><div style="left:21px;top:11.8px;width:1px;height:92.5px;background:linear-gradient(rgb(67,0,0),rgb(255,198,198))"></div><div style="left:22px;top:12.3px;width:1px;height:91.3px;background:linear-gradient(rgb(70,0,0),rgb(255,195,195))"></div><div style="left:23px;top:12.9px;width:1px;height:90.1px;background:linear-gradient(rgb(73,0,0),rgb(255,193,193))"></div><div style="left:24px;top:13.5px;width:1px;height:89.0px;background:linear-gradient(rgb(75,0,0),rgb(255,190,190))"></div><div style="left:25px;top:14.1px;width:1px;height:87.8px;background:linear-gradient(rgb(78,0,0),rgb(255,187,187))"></div><div style="left:26px;top:14.7px;width:1px;height:86.7px;background:linear-gradient(rgb(81,0,0),rgb(255,185,185))"></div><div style="left:27px;top:15.2px;width:1px;height:85.5px;background:linear-gradient(rgb(83,0,0),rgb(255,182,182))"></div><div style="left:28px;top:15.8px;width:1px;height:84.4px;background:linear-gradient(rgb(86,0,0),rgb(255,179,179))"></div><div style="left:29px;top:16.4px;width:1px;height:83.2px;background:linear-gradient(rgb(89,0,0),rgb(255,177,177))"></div><div style="left:30px;top:17.0px;width:1px;height:82.1px;background:linear-gradient(rgb(91,0,0),rgb(255,174,174))"></div><div style="left:31px;top:17.5px;width:1px;height:80.9px;background:linear-gradient(rgb(94,0,0),rgb(255,171,171))"></div><div style="left:32px;top:18.1px;width:1px;height:79.8px;background:linear-gradient(rgb(96,0,0),rgb(255,169,169))"></div><div style="left:33px;top:18.7px;width:1px;height:78.6px;background:linear-gradient(rgb(99,0,0),rgb(255,166,166))"></div><div style="left:34px;top:19.3px;width:1px;height:77.5px;background:linear-gradient(rgb(101,0,0),rgb(255,163,163))"></div><div style="left:35px;top:19.9px;width:1px;height:76.3px;background:linear-gradient(rgb(104,0,0),rgb(255,161,161))"></div><div style="left:36px;top:20.4px;width:1px;height:75.1px;background:linear-gradient(rgb(107,0,0),rgb(255,158,158))"></div><div style="left:37px;top:21.0px;width:1px;height:74.0px;background:linear-gradient(rgb(109,0,0),rgb(255,155,155))"></div><div style="left:38px;top:21.6px;width:1px;height:72.8px;background:linear-gradient(rgb(112,0,0),rgb(255,153,153))"></div><div style="left:39px;top:22.2px;width:1px;height:71.7px;background:linear-gradient(rgb(114,0,0),rgb(255,150,150))"></div><div style="left:40px;top:22.7px;width:1px;height:70.5px;background:linear-gradient(rgb(117,0,0),rgb(255,147,147))"></div><div style="left:41px;top:23.3px;width:1px;height:69.4px;background:linear-gradient(rgb(119,0,0),rgb(255,145,145))"></div><div style="left:42px;top:23.9px;width:1px;height:68.2px;background:linear-gradient(rgb(121,0,0),rgb(255,142,142))"></div><div style="left:43px;top:24.5px;width:1px;height:67.1px;background:linear-gradient(rgb(124,0,0),rgb(255,140,140))"></div><div style="left:44px;top:25.0px;width:1px;height:65.9px;background:linear-gradient(rgb(126,0,0),rgb(255,137,137))"></div><div style="left:45px;top:25.6px;width:1px;height:64.8px;background:linear-gradient(rgb(129,0,0),rgb(255,134,134))"></div><div style="left:46px;top:26.2px;width:1px;height:63.6px;background:linear-gradient(rgb(131,0,0),rgb(255,132,132))"></div><div style="left:47px;top:26.8px;width:1px;height:62.4px;background:linear-gradient(rgb(134,0,0),rgb(255,129,129))"></div><div style="left:48px;top:27.4px;width:1px;height:61.3px;background:linear-gradient(rgb(136,0,0),rgb(255,126,126))"></div><div style="left:49px;top:27.9px;width:1px;height:60.1px;background:linear-gradient(rgb(138,0,0),rgb(255,124,124))"></div><div style="left:50px;top:28.5px;width:1px;height:59.0px;background:linear-gradient(rgb(141,0,0),rgb(255,121,121))"></div><div style="left:51px;top:29.1px;width:1px;height:57.8px;background:linear-gradient(rgb(143,0,0),rgb(255,119,119))"></div><div style="left:52px;top:29.7px;width:1px;height:56.7px;background:linear-gradient(rgb(146,0,0),rgb(255,116,116))"></div><div style="left:53px;top:30.2px;width:1px;height:55.5px;background:linear-gradient(rgb(148,0,0),rgb(255,114,114))"></div><div style="left:54px;top:30.8px;width:1px;height:54.4px;background:linear-gradient(rgb(150,0,0),rgb(255,111,111))"></div><div style="left:55px;top:31.4px;width:1px;height:53.2px;background:linear-gradient(rgb(153,0,0),rgb(255,108,108))"></div><div style="left:56px;top:32.0px;width:1px;height:52.1px;background:linear-gradient(rgb(155,0,0),rgb(255,106,106))"></div><div style="left:57px;top:32.5px;width:1px;height:50.9px;background:linear-gradient(rgb(157,0,0),rgb(255,103,103))"></div><div style="left:58px;top:33.1px;width:1px;height:49.8px;background:linear-gradient(rgb(160,0,0),rgb(255,101,101))"></div><div style="left:59px;top:33.7px;width:1px;height:48.6px;background:linear-gradient(rgb(162,0,0),rgb(255,98,98))"></div><div style="left:60px;top:34.3px;width:1px;height:47.4px;background:linear-gradient(rgb(164,0,0),rgb(255,96,96))"></div><div style="left:61px;top:34.9px;width:1px;height:46.3px;background:linear-gradient(rgb(167,0,0),rgb(255,93,93))"></div><div style="left:62px;top:35.4px;width:1px;height:45.1px;background:linear-gradient(rgb(169,0,0),rgb(255,90,90))"></div><div style="left:63px;top:36.0px;width:1px;height:44.0px;background:linear-gradient(rgb(171,0,0),rgb(255,88,88))"></div><div style="left:64px;top:36.6px;width:1px;height:42.8px;background:linear-gradient(rgb(174,0,0),rgb(255,85,85))"></div><div style="left:65px;top:37.2px;width:1px;height:41.7px;background:linear-gradient(rgb(176,0,0),rgb(255,83,83))"></div><div style="left:66px;top:37.7px;width:1px;height:40.5px;background:linear-gradient(rgb(178,0,0),rgb(255,80,80))"></div><div style="left:67px;top:38.3px;width:1px;height:39.4px;background:linear-gradient(rgb(181,0,0),rgb(255,78,78))"></div><div style="left:68px;top:38.9px;width:1px;height:38.2px;background:linear-gradient(rgb(183,0,0),rgb(255,75,75))"></div><div style="left:69px;top:39.5px;width:1px;height:37.1px;background:linear-gradient(rgb(185,0,0),rgb(255,73,73))"></div><div style="left:70px;top:40.1px;width:1px;height:35.9px;background:linear-gradient(rgb(188,0,0),rgb(255,70,70))"></div><div style="left:71px;top:40.6px;width:1px;height:34.7px;background:linear-gradient(rgb(190,0,0),rgb(255,68,68))"></div><div style="left:72px;top:41.2px;width:1px;height:33.6px;background:linear-gradient(rgb(192,0,0),rgb(255,65,65))"></div><div style="left:73px;top:41.8px;width:1px;height:32.4px;background:linear-gradient(rgb(194,0,0),rgb(255,63,63))"></div><div style="left:74px;top:42.4px;width:1px;height:31.3px;background:linear-gradient(rgb(197,0,0),rgb(255,60,60))"></div><div style="left:75px;top:42.9px;width:1px;height:30.1px;background:linear-gradient(rgb(199,0,0),rgb(255,58,58))"></div><div style="left:76px;top:43.5px;width:1px;height:29.0px;background:linear-gradient(rgb(201,0,0),rgb(255,56,56))"></div><div style="left:77px;top:44.1px;width:1px;height:27.8px;background:linear-gradient(rgb(203,0,0),rgb(255,53,53))"></div><div style="left:78px;top:44.7px;width:1px;height:26.7px;background:linear-gradient(rgb(206,0,0),rgb(255,51,51))"></div><div style="left:79px;top:45.2px;width:1px;height:25.5px;background:linear-gradient(rgb(208,0,0),rgb(255,48,48))"></div><div style="left:80px;top:45.8px;width:1px;height:24.4px;background:linear-gradient(rgb(210,0,0),rgb(255,46,46))"></div><div style="left:81px;top:46.4px;width:1px;height:23.2px;background:linear-gradient(rgb(212,0,0),rgb(255,43,43))"></div><div style="left:82px;top:47.0px;width:1px;height:22.0px;background:linear-gradient(rgb(215,0,0),rgb(255,41,41))"></div><div style="left:83px;top:47.6px;width:1px;height:20.9px;background:linear-gradient(rgb(217,0,0),rgb(255,39,39))"></div><div style="left:84px;top:48.1px;width:1px;height:19.7px;background:linear-gradient(rgb(219,0,0),rgb(255,36,36))"></div><div style="left:85px;top:48.7px;width:1px;height:18.6px;background:linear-gradient(rgb(221,0,0),rgb(255,34,34))"></div><div style="left:86px;top:49.3px;width:1px;height:17.4px;background:linear-gradient(rgb(223,0,0),rgb(255,32,32))"></div><div style="left:87px;top:49.9px;width:1px;height:16.3px;background:linear-gradient(rgb(226,0,0),rgb(255,29,29))"></div><div style="left:88px;top:50.4px;width:1px;height:15.1px;background:linear-gradient(rgb(228,0,0),rgb(255,27,27))"></div><div style="left:89px;top:51.0px;width:1px;height:14.0px;background:linear-gradient(rgb(230,0,0),rgb(255,25,25))"></div><div style="left:90px;top:51.6px;width:1px;height:12.8px;background:linear-gradient(rgb(232,0,0),rgb(255,22,22))"></div><div style="left:91px;top:52.2px;width:1px;height:11.7px;background:linear-gradient(rgb(234,0,0),rgb(255,20,20))"></div><div style="left:92px;top:52.7px;width:1px;height:10.5px;background:linear-gradient(rgb(237,0,0),rgb(255,18,18))"></div><div style="left:93px;top:53.3px;width:1px;height:9.4px;background:linear-gradient(rgb(239,0,0),rgb(255,15,15))"></div><div style="left:94px;top:53.9px;width:1px;height:8.2px;background:linear-gradient(rgb(241,0,0),rgb(255,13,13))"></div><div style="left:95px;top:54.5px;width:1px;height:7.0px;background:linear-gradient(rgb(243,0,0),rgb(255,11,11))"></div><div style="left:96px;top:55.1px;width:1px;height:5.9px;background:linear-gradient(rgb(245,0,0),rgb(255,9,9))"></div><div style="left:97px;top:55.6px;width:1px;height:4.7px;background:linear-gradient(rgb(247,0,0),rgb(255,7,7))"></div><div style="left:98px;top:56.2px;width:1px;height:3.6px;background:linear-gradient(rgb(250,0,0),rgb(255,5,5))"></div><div style="left:99px;top:56.8px;width:1px;height:2.4px;background:linear-gradient(rgb(252,0,0),rgb(255,3,3))"></div><div style="left:100px;top:57.4px;width:1px;height:1.3px;background:linear-gradient(rgb(254,0,0),rgb(255,1,1))"></div><div style="left:101px;top:57.7px;width:1px;height:0.7px;background:linear-gradient(rgb(255,0,0),rgb(255,0,0))"></div></div>
<svg style="left:1725px;top:271.2px;" width="20" height="20" viewBox="0 0 20 20"><circle cx="10" cy="10" r="5.6" fill="#ff0000" stroke="#fff" stroke-width="1.6"/></svg>
<svg style="left:1614px;top:320.4px;" width="20" height="20" viewBox="0 0 20 20"><circle cx="10" cy="10" r="5.4" fill="#e6e4ea" stroke="#fff" stroke-width="1.3"/><circle cx="10" cy="10" r="6.3" fill="none" stroke="#777" stroke-width="0.5"/></svg>
<span class="t" style="left:1517px;top:327.0px;font-size:11px;line-height:16px;color:#c4c4c4;transform:scaleX(0.9709);">H: 0</span>
<span class="t" style="left:1519.3px;top:341.4px;font-size:11px;line-height:16px;color:#c4c4c4;transform:scaleX(0.8836);">S: 0</span>
<span class="t" style="left:1520.2px;top:356.8px;font-size:11px;line-height:16px;color:#c4c4c4;transform:scaleX(0.9155);">L: 92</span>
<span class="t" style="left:1732px;top:352.4px;font-size:11px;line-height:16px;color:#a8a8a8;transform:scaleX(0.9578);">#:</span>
<div style="left:1744.7px;top:350.3px;width:53.4px;height:19.6px;background:#2a2a2a;border-radius:2px;"></div>
<span class="t" style="left:1746px;top:351.4px;font-size:12px;line-height:18px;color:#ececec;transform:scaleX(0.8245);">EBEBEB</span>
<span class="t" style="left:1522px;top:374.5px;font-size:12.6px;line-height:19px;color:#b8b8b8;transform:scaleX(0.8462);">不透明度</span>
<svg style="left:1525px;top:394px;" width="20" height="20" viewBox="0 0 20 20"><circle cx="10.4" cy="9.8" r="9" fill="#4a4a4a"/><circle cx="10.4" cy="9.8" r="7.4" fill="#ebebeb"/></svg>
<div style="left:1551.2px;top:399.7px;width:165px;height:10.4px;background:linear-gradient(90deg,#f4f4f4 0%,#c4c4c4 25%,#949494 50%,#6a6a6a 75%,#4a4a4a 100%);border-radius:5.2px;"></div>
<svg style="left:1706px;top:395px;" width="20" height="20" viewBox="0 0 20 20"><circle cx="9" cy="9.7" r="5.9" fill="#444" stroke="#fff" stroke-width="1.5"/></svg>
<div style="left:1728.8px;top:392.6px;width:48.4px;height:20.2px;background:#2a2a2a;border-radius:2px 0 0 2px;"></div>
<span class="t" style="left:1735px;top:394.7px;font-size:12px;line-height:18px;color:#e4e4e4;transform:scaleX(0.9638);">100 %</span>
<div style="left:1777.2px;top:393.2px;width:16.6px;height:19.4px;background:#464646;border-radius:0 2px 2px 0;"></div>
<svg style="left:1779px;top:396px;" width="14" height="12" viewBox="0 0 14 12"><path d="M3 4.4L6.9 8L10.8 4.4" fill="none" stroke="#e8e8e8" stroke-width="1.3"/></svg>
<span class="t" style="left:1515.3px;top:464.2px;font-size:12.8px;line-height:19px;color:#787878;transform:scaleX(0.8351);">不透明度:</span>
<div style="left:1567.5px;top:464.5px;width:59.5px;height:18.6px;background:#343434;border-radius:2px;"></div>
<span class="t" style="left:1574px;top:464.7px;font-size:12px;line-height:18px;color:#858585;transform:scaleX(0.9697);">100 %</span>
<svg style="left:1613px;top:468px;" width="14" height="12" viewBox="0 0 14 12"><path d="M3.4 4L7 7.4L10.6 4" fill="none" stroke="#8a8a8a" stroke-width="1.2"/></svg>
<div style="left:1633.5px;top:464.5px;width:122.8px;height:18.6px;background:#343434;border-radius:2px;"></div>
<span class="t" style="left:1638.6px;top:463.7px;font-size:13.4px;line-height:20px;color:#858585;transform:scaleX(0.9385);">標準</span>
<svg style="left:1740.4px;top:468px;" width="14" height="12" viewBox="0 0 14 12"><path d="M3.4 4L7 7.4L10.6 4" fill="none" stroke="#8a8a8a" stroke-width="1.2"/></svg>
<svg style="left:1762px;top:466px;" width="16" height="16" viewBox="0 0 16 16"><g transform="translate(7.8,7.8) scale(0.86)"><rect x="-1.5" y="-6.4" width="3" height="3.4" fill="#c8c8c8" transform="rotate(0)"/><rect x="-1.5" y="-6.4" width="3" height="3.4" fill="#c8c8c8" transform="rotate(45)"/><rect x="-1.5" y="-6.4" width="3" height="3.4" fill="#c8c8c8" transform="rotate(90)"/><rect x="-1.5" y="-6.4" width="3" height="3.4" fill="#c8c8c8" transform="rotate(135)"/><rect x="-1.5" y="-6.4" width="3" height="3.4" fill="#c8c8c8" transform="rotate(180)"/><rect x="-1.5" y="-6.4" width="3" height="3.4" fill="#c8c8c8" transform="rotate(225)"/><rect x="-1.5" y="-6.4" width="3" height="3.4" fill="#c8c8c8" transform="rotate(270)"/><rect x="-1.5" y="-6.4" width="3" height="3.4" fill="#c8c8c8" transform="rotate(315)"/><circle r="4.6" fill="#c8c8c8"/><circle r="1.9" fill="#383838"/></g></svg>
<svg style="left:1786px;top:464px;" width="16" height="18" viewBox="0 0 16 18"><path d="M5 8.8V6.2A2.7 2.7 0 0 1 10.4 6.2V8.8" fill="none" stroke="#c4c4c4" stroke-width="1.3"/><rect x="3.8" y="8.6" width="7.8" height="6.4" rx="0.8" fill="#c4c4c4"/></svg>
<div style="left:1506px;top:842px;width:305px;height:30px;background:#383838;"></div>
<div style="left:1511.3px;top:843.2px;width:23.8px;height:21.8px;background:#2e2e2e;border-radius:2px;"></div>
<svg style="left:1514px;top:846px;" width="18" height="18" viewBox="0 0 18 18"><rect x="2.4" y="2" width="8.6" height="8.6" rx="1" fill="none" stroke="#c8c8c8" stroke-width="1.2"/><path d="M13 4.6V12.6H5M15.4 7V15H7.4" fill="none" stroke="#c8c8c8" stroke-width="1.2"/></svg>
<svg style="left:1623px;top:847px;" width="18" height="18" viewBox="0 0 18 18"><rect x="1.6" y="1.8" width="16" height="13.8" rx="1.6" fill="#b8b8b8"/><circle cx="9.6" cy="8.7" r="3.6" fill="#383838"/></svg>
<svg style="left:1646px;top:847px;" width="18" height="18" viewBox="0 0 18 18"><circle cx="9" cy="9" r="7.2" fill="none" stroke="#b8b8b8" stroke-width="1.2"/><path d="M3.6 13.2A6 6 0 0 0 13.4 5Z" fill="#b8b8b8"/></svg>
<svg style="left:1670px;top:846px;" width="16" height="20" viewBox="0 0 16 20"><path d="M1.6 2.2H14M1.6 17.4H14" stroke="#b8b8b8" stroke-width="1.1"/><path d="M3 14.4V5.6H7M3 9.8H6.4M8 5.6L13.4 14.4M13.4 5.6L8 14.4" fill="none" stroke="#b8b8b8" stroke-width="1.4"/></svg>
<svg style="left:1692px;top:846px;" width="18" height="20" viewBox="0 0 18 20"><path d="M4.6 2.6H13.8C15 7 16 11.6 16.6 16.6H1.6C2.4 11.6 3.4 7 4.6 2.6ZM3.8 7H14.8M2.6 11.8H15.8M7.6 2.6L6.4 16.6M10.8 2.6L11.8 16.6" fill="none" stroke="#b8b8b8" stroke-width="1.1"/></svg>
<svg style="left:1743px;top:846px;" width="16" height="20" viewBox="0 0 16 20"><path d="M9.4 3.2H1.8V17H12.6V7" fill="none" stroke="#8a8a8a" stroke-width="1.2"/><path d="M4 8.6H10.4M4 11.2H10.4M4 13.8H8" stroke="#8a8a8a" stroke-width="1.1"/><path d="M10.6 3.2H14.6M12.6 1.2V5.2" stroke="#8a8a8a" stroke-width="1.1"/></svg>
<svg style="left:1766px;top:846px;" width="14" height="20" viewBox="0 0 14 20"><rect x="1.4" y="2.6" width="11" height="14.4" fill="none" stroke="#8a8a8a" stroke-width="1.2"/><rect x="4" y="5.2" width="2" height="2" fill="#8a8a8a"/><rect x="4" y="9.2" width="2" height="2" fill="#8a8a8a"/><rect x="4" y="13.2" width="2" height="2" fill="#8a8a8a"/><rect x="6" y="7.2" width="2" height="2" fill="#8a8a8a"/><rect x="6" y="11.2" width="2" height="2" fill="#8a8a8a"/><rect x="8" y="5.2" width="2" height="2" fill="#8a8a8a"/><rect x="8" y="9.2" width="2" height="2" fill="#8a8a8a"/><rect x="8" y="13.2" width="2" height="2" fill="#8a8a8a"/></svg>
<svg style="left:1789px;top:846px;" width="14" height="20" viewBox="0 0 14 20"><path d="M0.8 4.8H12.8M4.6 4.6V2.6H9V4.6M2.2 5V16.6Q2.2 17.4 3 17.4H10.6Q11.4 17.4 11.4 16.6V5M5 7.4V15M6.8 7.4V15M8.6 7.4V15" fill="none" stroke="#7c7c7c" stroke-width="1.1"/></svg>
<svg style="left:1525px;top:943.5px;" width="41" height="40.4" viewBox="0 0 41 40.4"><rect x="2.4" y="2.4" width="36.2" height="35.6" fill="#6a6a6c"/><rect x="0" y="0" width="5.4" height="5.4" fill="#6a6a6c"/><rect x="0" y="17.5" width="5.4" height="5.4" fill="#6a6a6c"/><rect x="0" y="35" width="5.4" height="5.4" fill="#6a6a6c"/><rect x="17.8" y="0" width="5.4" height="5.4" fill="#6a6a6c"/><rect x="17.8" y="17.5" width="5.4" height="5.4" fill="#6a6a6c"/><rect x="17.8" y="35" width="5.4" height="5.4" fill="#6a6a6c"/><rect x="35.6" y="0" width="5.4" height="5.4" fill="#6a6a6c"/><rect x="35.6" y="17.5" width="5.4" height="5.4" fill="#6a6a6c"/><rect x="35.6" y="35" width="5.4" height="5.4" fill="#6a6a6c"/></svg>
<span class="t" style="left:1584.3px;top:921.5px;font-size:12px;line-height:18px;color:#747474;transform:scaleX(0.8287);">X:</span>
<span class="t" style="left:1686.9px;top:921.5px;font-size:12px;line-height:18px;color:#747474;transform:scaleX(0.9271);">W:</span>
<span class="t" style="left:1584.8px;top:948.7px;font-size:12px;line-height:18px;color:#747474;transform:scaleX(0.8327);">Y:</span>
<span class="t" style="left:1689.6px;top:948.7px;font-size:12px;line-height:18px;color:#747474;transform:scaleX(0.8917);">H:</span>
<span class="t" style="left:1584.3px;top:982.8px;font-size:12px;line-height:18px;color:#747474;transform:scaleX(0.7833);">R:</span>
<span class="t" style="left:1691.4px;top:982.8px;font-size:12px;line-height:18px;color:#747474;transform:scaleX(0.7846);">S:</span>
<div style="left:1599.6px;top:920.5px;width:72.4px;height:19.6px;background:#343434;border-radius:2px;"></div>
<div style="left:1599.6px;top:948px;width:72.4px;height:19.6px;background:#343434;border-radius:2px;"></div>
<div style="left:1599.6px;top:981.6px;width:72.4px;height:19.6px;background:#343434;border-radius:2px;"></div>
<div style="left:1706.7px;top:920.5px;width:72.4px;height:19.6px;background:#343434;border-radius:2px;"></div>
<div style="left:1706.7px;top:948px;width:72.4px;height:19.6px;background:#343434;border-radius:2px;"></div>
<div style="left:1706.7px;top:981.6px;width:72.4px;height:19.6px;background:#343434;border-radius:2px;"></div>
<span class="t" style="left:1605.6px;top:921.5px;font-size:12px;line-height:18px;color:#858585;transform:scaleX(1.0567);">0 mm</span>
<span class="t" style="left:1605.6px;top:948.7px;font-size:12px;line-height:18px;color:#858585;transform:scaleX(1.0567);">0 mm</span>
<span class="t" style="left:1605.6px;top:982.8px;font-size:12px;line-height:18px;color:#858585;transform:scaleX(0.9857);">0 °</span>
<span class="t" style="left:1712.9px;top:921.5px;font-size:12px;line-height:18px;color:#858585;transform:scaleX(1.0500);">0 mm</span>
<span class="t" style="left:1712.9px;top:948.7px;font-size:12px;line-height:18px;color:#858585;transform:scaleX(1.0500);">0 mm</span>
<span class="t" style="left:1712.9px;top:982.8px;font-size:12px;line-height:18px;color:#858585;transform:scaleX(0.9857);">0 °</span>
<svg style="left:1657.4px;top:986px;" width="14" height="12" viewBox="0 0 14 12"><path d="M3.8 3.8L7 6.8L10.2 3.8" fill="none" stroke="#9c9c9c" stroke-width="1.2"/></svg>
<svg style="left:1764.2px;top:986px;" width="14" height="12" viewBox="0 0 14 12"><path d="M3.8 3.8L7 6.8L10.2 3.8" fill="none" stroke="#9c9c9c" stroke-width="1.2"/></svg>
<svg style="left:1791px;top:930px;" width="12" height="28" viewBox="0 0 12 28"><path d="M4.6 12.4H3.8Q2.6 12.4 2.6 11.2V3.8Q2.6 2.6 3.8 2.6H8.2Q9.4 2.6 9.4 3.8V11.2Q9.4 12.4 8.2 12.4H7.4M4.6 14.4H3.8Q2.6 14.4 2.6 15.6V23Q2.6 24.2 3.8 24.2H8.2Q9.4 24.2 9.4 23V15.6Q9.4 14.4 8.2 14.4H7.4" fill="none" stroke="#a8a8a8" stroke-width="1.2"/></svg>
<div style="left:1729px;top:1011.6px;width:34.4px;height:29.4px;background:#444;border-radius:3px 0 0 3px;"></div>
<div style="left:1764.2px;top:1011.6px;width:15px;height:29.4px;background:#444;border-radius:0 3px 3px 0;"></div>
<svg style="left:1733px;top:1014px;" width="26" height="24" viewBox="0 0 26 24"><rect x="4" y="4" width="17.6" height="15.6" fill="none" stroke="#6e6e6e" stroke-width="1.4" stroke-dasharray="5 2.6"/><rect x="3.6" y="11.4" width="9.6" height="8.6" rx="2" fill="#6e6e6e"/></svg>
<svg style="left:1764.4px;top:1019.4px;" width="14" height="12" viewBox="0 0 14 12"><path d="M3.6 3.6L7 6.8L10.4 3.6" fill="none" stroke="#f0f0f0" stroke-width="1.4"/></svg></div></body></html>
